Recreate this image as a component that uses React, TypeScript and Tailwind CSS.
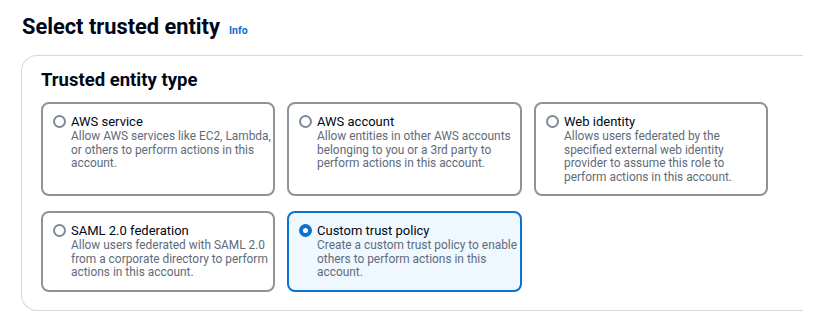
import React from "react";

type Opt = { title: string; lines: string[]; selected?: boolean };

const row1: Opt[] = [
  { title: "AWS service", lines: ["Allow AWS services like EC2, Lambda,", "or others to perform actions in this", "account."] },
  { title: "AWS account", lines: ["Allow entities in other AWS accounts", "belonging to you or a 3rd party to", "perform actions in this account."] },
  { title: "Web identity", lines: ["Allows users federated by the", "specified external web identity", "provider to assume this role to", "perform actions in this account."] },
];
const row2: Opt[] = [
  { title: "SAML 2.0 federation", lines: ["Allow users federated with SAML 2.0", "from a corporate directory to perform", "actions in this account."] },
  { title: "Custom trust policy", lines: ["Create a custom trust policy to enable", "others to perform actions in this", "account."], selected: true },
];

function Card({ o }: { o: Opt }) {
  return (
    <div
      className={
        o.selected
          ? "flex gap-[5px] rounded-[8px] border-2 border-[#0972d3] bg-[#f0f8ff] pl-[10px] pr-[8px] pt-[9px] pb-[10px]"
          : "flex gap-[5px] rounded-[8px] border-2 border-[#8d939b] bg-white pl-[10px] pr-[8px] pt-[9px] pb-[10px]"
      }
    >
      <div className="pt-[2px] shrink-0">
        {o.selected ? (
          <div className="w-[13px] h-[13px] rounded-full border-[4px] border-[#0972d3] bg-white" />
        ) : (
          <div className="w-[13px] h-[13px] rounded-full border-2 border-[#7d8998] bg-white" />
        )}
      </div>
      <div className="flex flex-col">
        <div className="text-[13px] leading-[17px] text-[#000716] whitespace-nowrap">{o.title}</div>
        {o.lines.map((l) => (
          <div key={l} className="text-[11.9px] leading-[13.5px] text-[#5f6b7a] whitespace-nowrap">
            {l}
          </div>
        ))}
      </div>
    </div>
  );
}

export default function App() {
  return (
    <div className="w-[828px] h-[315px] bg-white overflow-hidden font-['Roboto',sans-serif]">
      <div className="pl-[22px] pt-[13px] flex items-baseline gap-[9px]">
        <h1 className="text-[21.8px] leading-[28px] font-bold text-[#000716]">Select trusted entity</h1>
        <span className="text-[10.5px] font-bold text-[#0972d3]">Info</span>
      </div>
      <div className="ml-[21px] mt-[14px] w-[782px] border-t border-b border-l border-[#d5d9dc] rounded-l-[16px] pl-[19px] pt-[13px] pb-[18px]">
        <h2 className="text-[18.5px] leading-[22px] font-bold text-[#000716]">Trusted entity type</h2>
        <div className="mt-[11px] grid grid-cols-[234px_235px_234px] gap-x-[12px] gap-y-[15px]">
          {row1.map((o) => (
            <Card key={o.title} o={o} />
          ))}
          {row2.map((o) => (
            <Card key={o.title} o={o} />
          ))}
        </div>
      </div>
    </div>
  );
}
